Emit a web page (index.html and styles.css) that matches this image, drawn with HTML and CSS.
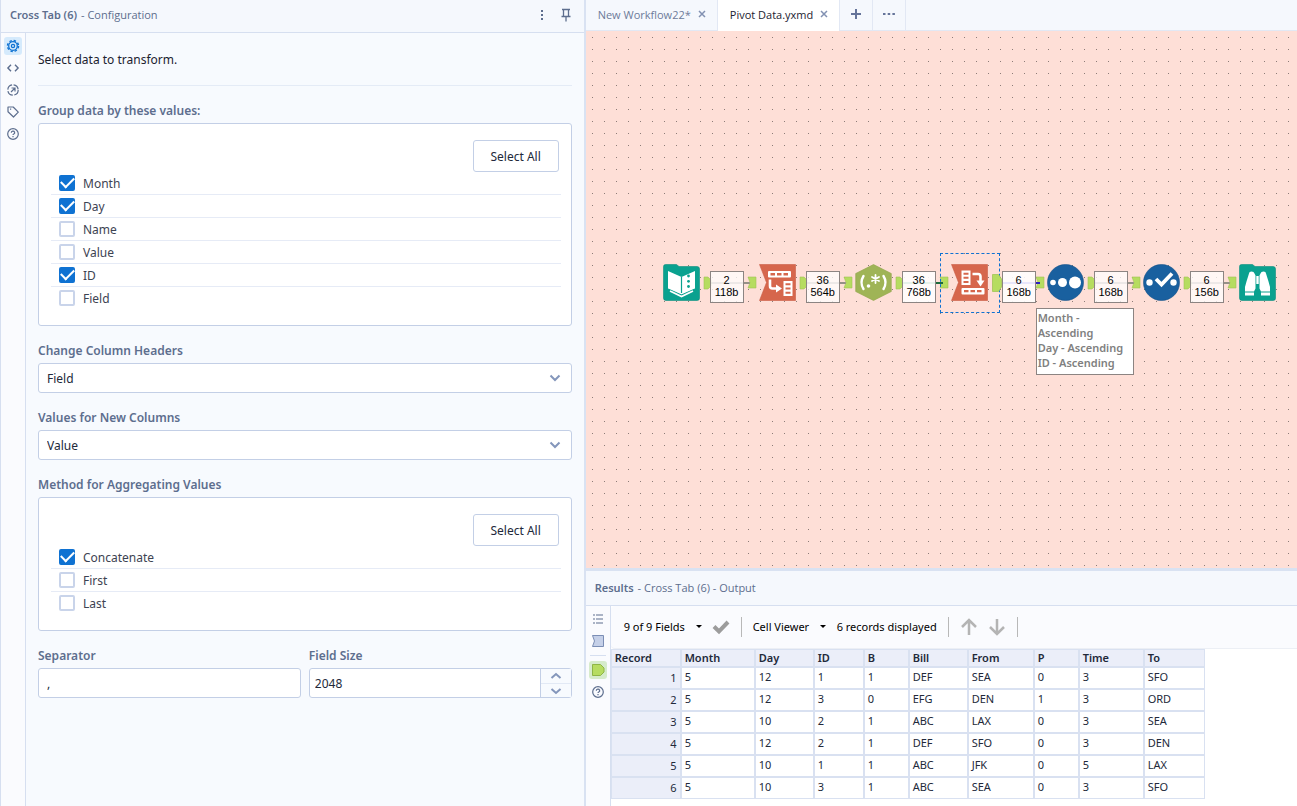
FILE: index.html
```html
<!DOCTYPE html>
<html lang="en">
<head>
  <meta charset="UTF-8">
  <title>Pivot Data.yxmd</title>
  <link rel="stylesheet" href="styles.css">
</head>
<body>

  <section class="config">
    <header class="panel-head">
      <h2>Cross Tab (6)</h2>
      <span>- Configuration</span>
      <div class="head-tools">
        <button type="button" aria-label="More">
          <svg width="14" height="14" viewBox="0 0 14 14" fill="currentColor"><path d="M6 2h2v2H6zM6 6h2v2H6zM6 10h2v2H6z"/></svg>
        </button>
        <button type="button" aria-label="Pin">
          <svg width="14" height="14" viewBox="0 0 14 14" fill="none" stroke="currentColor"><path stroke-width="1.3" d="M3 1.5h8M4.5 1.5v6.5M9.5 1.5v6.5M2.5 8.5h9M7 8.5v5"/></svg>
        </button>
      </div>
    </header>

    <div class="panel-main">
      <nav class="rail">
        <button type="button" class="on" aria-label="Configuration">
          <svg width="14" height="14" viewBox="0 0 14 14" fill="none" stroke="currentColor" stroke-width="1.3"><circle cx="7" cy="7" r="4.3"/><circle cx="7" cy="7" r="1.6"/><circle cx="7" cy="7" r="5.5" stroke-width="1.5" stroke-dasharray="2.4 1.92"/></svg>
        </button>
        <button type="button" aria-label="XML">
          <svg width="14" height="14" viewBox="0 0 14 14" fill="none" stroke="currentColor" stroke-width="1.4"><path d="M5 3.8 1.9 7 5 10.2M9 3.8 12.1 7 9 10.2"/></svg>
        </button>
        <button type="button" aria-label="Navigation">
          <svg width="14" height="14" viewBox="0 0 14 14" fill="none" stroke="currentColor" stroke-width="1.2"><circle cx="7" cy="7" r="5.2" stroke-dasharray="6.6 1.567"/><path d="M5 9l4-4M5.5 5H9v3.5"/></svg>
        </button>
        <button type="button" aria-label="Annotation">
          <svg width="14" height="14" viewBox="0 0 14 14" fill="none" stroke="currentColor" stroke-width="1.2"><path d="M2 2h5.2L12.3 7.2 7.5 12 2 6.8z" stroke-linejoin="round"/><path d="M4 4.2h1.2"/></svg>
        </button>
        <button type="button" aria-label="Help">
          <svg width="14" height="14" viewBox="0 0 14 14" fill="none" stroke="currentColor" stroke-width="1.2"><circle cx="7" cy="7" r="5.3"/><path d="M5.3 5.7a1.7 1.5 0 1 1 2.5 1.3q-.8.4-.8 1M7 9v1.2"/></svg>
        </button>
      </nav>

      <form class="settings">
        <p class="lead">Select data to transform.</p>

        <fieldset>
          <legend>Group data by these values:</legend>
          <div class="box">
            <button type="button" class="select-all">Select All</button>
            <label class="check"><input type="checkbox" checked>Month</label>
            <label class="check"><input type="checkbox" checked>Day</label>
            <label class="check"><input type="checkbox">Name</label>
            <label class="check"><input type="checkbox">Value</label>
            <label class="check"><input type="checkbox" checked>ID</label>
            <label class="check"><input type="checkbox">Field</label>
          </div>
        </fieldset>

        <div class="field">
          <label for="headers">Change Column Headers</label>
          <div class="select">
            <select id="headers"><option>Field</option></select>
            <svg width="12" height="8" viewBox="0 0 12 8"><path d="M1.5 1.5 6 6l4.5-4.5"/></svg>
          </div>
        </div>

        <div class="field">
          <label for="values">Values for New Columns</label>
          <div class="select">
            <select id="values"><option>Value</option></select>
            <svg width="12" height="8" viewBox="0 0 12 8"><path d="M1.5 1.5 6 6l4.5-4.5"/></svg>
          </div>
        </div>

        <fieldset>
          <legend>Method for Aggregating Values</legend>
          <div class="box">
            <button type="button" class="select-all">Select All</button>
            <label class="check"><input type="checkbox" checked>Concatenate</label>
            <label class="check"><input type="checkbox">First</label>
            <label class="check"><input type="checkbox">Last</label>
          </div>
        </fieldset>

        <div class="pair">
          <div class="field">
            <label for="separator">Separator</label>
            <input type="text" id="separator" value=",">
          </div>
          <div class="field">
            <label for="size">Field Size</label>
            <div class="spin">
              <input type="text" inputmode="numeric" id="size" value="2048">
              <div class="spin-buttons">
                <button type="button" aria-label="Increase"><svg width="12" height="8" viewBox="0 0 12 8"><path d="M1.5 6 6 2l4.5 4"/></svg></button>
                <button type="button" aria-label="Decrease"><svg width="12" height="8" viewBox="0 0 12 8"><path d="M1.5 2 6 6l4.5-4"/></svg></button>
              </div>
            </div>
          </div>
        </div>
      </form>
    </div>
  </section>

  <main class="work">
    <nav class="tabs">
      <div class="tab">
        <a href="#">New Workflow22*</a>
        <button type="button" aria-label="Close"><svg width="8" height="8" viewBox="0 0 8 8"><path d="M1 1l6 6M7 1 1 7"/></svg></button>
      </div>
      <div class="tab active">
        <a href="#">Pivot Data.yxmd</a>
        <button type="button" aria-label="Close"><svg width="8" height="8" viewBox="0 0 8 8"><path d="M1 1l6 6M7 1 1 7"/></svg></button>
      </div>
      <button type="button" class="tab-btn" aria-label="New tab"><svg width="12" height="12" viewBox="0 0 12 12"><path d="M6 1v10M1 6h10"/></svg></button>
      <button type="button" class="tab-btn" aria-label="More tabs"><svg width="12" height="12" viewBox="0 0 12 12"><path d="M0 6h2.5M4.7 6h2.5M9.4 6h2.5"/></svg></button>
    </nav>

    <div class="canvas">
      <!-- connectors and anchors, in canvas coordinates -->
      <svg class="wires" width="711" height="537" viewBox="0 0 711 537">
        <defs>
          <path id="out" d="M0 0h4l3 3v6l-3 3H0z"/>
          <path id="in" d="M0 0h8v11H0l2-5.5z"/>
        </defs>
        <g stroke="#a08f8d" stroke-width="1.5">
          <path d="M124 252h39M220 252h39M508 252h39M604 252h39"/>
          <path stroke="#2f8f57" stroke-width="2" d="M316 252h42"/>
          <path stroke="#4034d0" stroke-width="2" d="M416 252h38"/>
        </g>
        <g fill="#b6dc60" stroke="#a2c455" stroke-width=".6">
          <use href="#out" x="118" y="246"/><use href="#out" x="214" y="246"/><use href="#out" x="310" y="246"/>
          <use href="#out" x="502" y="246"/><use href="#out" x="598" y="246"/>
          <use href="#in" x="162" y="246"/><use href="#in" x="258" y="246"/><use href="#in" x="354" y="246"/>
          <use href="#in" x="450" y="246"/><use href="#in" x="546" y="246"/><use href="#in" x="642" y="246"/>
        </g>
        <g stroke-width="1.5">
          <path stroke="#8a8a80" d="M158 252h6M254 252h6M542 252h6M638 252h6"/>
          <path stroke="#1c6b3c" stroke-width="2" d="M350 252h7"/>
          <path stroke="#2d22c0" stroke-width="2" d="M449 252h5"/>
        </g>
      </svg>

      <!-- Text Input -->
      <svg class="tool t1" viewBox="0 0 37 37">
        <path fill="#0aa18f" stroke="#0a8f7f" stroke-width=".6" d="M2.5.5h11l2.5 2h18q2.500 0 2.500 2.500v29.500q0 2-2.500 2h-31q-2.500 0-2.500-2.500V2.500Q.5.500 2.500.5z"/>
        <path fill="#fff" d="M5 7l13.500 6L32 7v18l-13.500 6L5 25z"/>
        <path fill="none" stroke="#0aa18f" stroke-width="1.2" d="M18.500 13v16"/>
        <path fill="none" stroke="#0aa18f" stroke-width="1.2" d="M5 25l13.500 6L32 25"/>
        <path fill="none" stroke="#fff" stroke-width="1.8" d="M7 27l11.500 5.500L30 27"/>
        <g fill="#0aa18f"><circle cx="25.500" cy="12" r="1.400"/><circle cx="25.500" cy="17.300" r="1.400"/><circle cx="25.500" cy="22.500" r="1.400"/></g>
      </svg>
      <!-- Transpose -->
      <svg class="tool t2" viewBox="0 0 37 37">
        <path fill="#d6664c" stroke="#c95d44" stroke-width=".6" d="M.5.5h36v36H.5L7.500 18.500z"/>
        <rect x="9" y="7" width="23" height="6.500" rx="1" fill="#fff"/>
        <path stroke="#d6664c" stroke-width="2.400" d="M11.500 10.200h4.500M18 10.200h4.500M24.500 10.200H29"/>
        <path fill="none" stroke="#fff" stroke-width="2.600" d="M11 15.500v6.500q0 2.500 2.500 2.500h5.500"/>
        <path fill="#fff" d="M17 20.500l6 4-6 4zM24.500 17h9v15h-9z"/>
        <path stroke="#d6664c" stroke-width="2" d="M26.500 20.200h5M26.500 24.400h5M26.500 28.700h5"/>
      </svg>
      <!-- RegEx -->
      <svg class="tool t3" viewBox="0 0 37 37">
        <path fill="#9fb456" stroke="#90a44a" stroke-width=".6" d="M18.500.5 36.300 9.500v18L18.500 36.500.7 27.500v-18z"/>
        <g fill="none" stroke="#fff" stroke-width="2.400" stroke-linecap="round">
          <path d="M8.500 12q-4 6.500 0 13M28.500 12q4 6.500 0 13"/>
          <path stroke-width="1.800" d="M20.500 11v8M17 13l7 4M24 13l-7 4"/>
        </g>
        <circle cx="13.500" cy="22" r="1.800" fill="#fff"/>
      </svg>
      <!-- Cross Tab, selected -->
      <div class="selection"></div>
      <svg class="anchor" viewBox="0 0 10 18"><path fill="#b6dc60" stroke="#a2c455" stroke-width=".8" d="M.5.5h6l3 4.500v8l-3 4.500h-6z"/></svg>
      <svg class="tool t4" viewBox="0 0 37 37">
        <path fill="#d6664c" stroke="#c95d44" stroke-width=".6" d="M.5.5h36v36H.5L7.500 18.500z"/>
        <path fill="#fff" d="M10.500 6.500h9v14.500h-9z"/>
        <path stroke="#d6664c" stroke-width="2" d="M12.500 9.700h5M12.500 13.800h5M12.500 18h5"/>
        <path fill="none" stroke="#fff" stroke-width="2.600" d="M21.500 10h5.500q2.500 0 2.500 2.500v5"/>
        <path fill="#fff" d="M25.500 16.500h8l-4 6z"/>
        <rect x="10.500" y="24" width="23" height="6.500" rx="1" fill="#fff"/>
        <path stroke="#d6664c" stroke-width="2.200" d="M13 27.200h4.500M19.500 27.200H24M26 27.200h4.500"/>
      </svg>
      <!-- Sort -->
      <svg class="tool t5" viewBox="0 0 37 37">
        <circle cx="18.500" cy="18.500" r="18" fill="#19609f" stroke="#145389" stroke-width=".6"/>
        <g fill="#fff"><circle cx="6" cy="18.500" r="2.800"/><circle cx="15.500" cy="18.500" r="4.500"/><circle cx="28" cy="18.500" r="6"/></g>
      </svg>
      <!-- Select -->
      <svg class="tool t6" viewBox="0 0 37 37">
        <circle cx="18.500" cy="18.500" r="18" fill="#19609f" stroke="#145389" stroke-width=".6"/>
        <g fill="#fff"><circle cx="6.500" cy="18.500" r="3.200"/><circle cx="30.500" cy="18.500" r="3.200"/></g>
        <path fill="none" stroke="#fff" stroke-width="3.800" d="M13 15l5.500 5.500L29 9.500"/>
      </svg>
      <!-- Browse -->
      <svg class="tool t7" viewBox="0 0 37 37">
        <path fill="#0aa18f" stroke="#0a8f7f" stroke-width=".6" d="M2.500.5h11l2.500 2h18q2.500 0 2.500 2.500v29.500q0 2-2.500 2h-31q-2.500 0-2.500-2.500V2.500Q.5.500 2.500.5z"/>
        <path fill="#fff" d="M10 9.500q0-2 2.500-2t3 2l1 2v13l-1.500 3H6q-.5-5 1.500-10zM27 9.500q0-2-2.500-2t-3 2l-1 2v13l1.500 3h9q.5-5-1.500-10zM17.300 12h2.400v8h-2.400zM6 28.500h9v3H6zM22 28.500h9v3h-9z"/>
      </svg>

      <div class="count c1">2<br>118b</div>
      <div class="count c2">36<br>564b</div>
      <div class="count solid c3">36<br>768b</div>
      <div class="count solid c4">6<br>168b</div>
      <div class="count c5">6<br>168b</div>
      <div class="count c6">6<br>156b</div>

      <div class="note">Month -<br>Ascending<br>Day - Ascending<br>ID - Ascending</div>
    </div>

    <section class="results">
      <header class="panel-head">
        <h2>Results</h2>
        <span>- Cross Tab (6) - Output</span>
      </header>
      <div class="panel-main">
        <nav class="rail">
          <button type="button" aria-label="Messages">
            <svg width="14" height="14" viewBox="0 0 14 14" fill="none" stroke="currentColor" stroke-width="1.2"><path d="M2 3h2M2 7h2M2 11h2M5 3h7M5 7h7M5 11h7"/></svg>
          </button>
          <button type="button" aria-label="Input anchor">
            <svg width="14" height="14" viewBox="0 0 14 14" fill="#c5d0e8" stroke="#7b8eb5"><path d="M1.500 1.500h11v11h-11l2-5.500z"/></svg>
          </button>
          <hr>
          <button type="button" class="out" aria-label="Output anchor">
            <svg width="14" height="14" viewBox="0 0 14 14" fill="#b6dc60" stroke="#8eb545"><path d="M1.500 1.500h8l3.500 3.500v4l-3.500 3.500h-8z"/></svg>
          </button>
          <button type="button" aria-label="Help">
            <svg width="14" height="14" viewBox="0 0 14 14" fill="none" stroke="currentColor" stroke-width="1.2"><circle cx="7" cy="7" r="5.3"/><path d="M5.3 5.7a1.7 1.5 0 1 1 2.5 1.3q-.8.4-.8 1M7 9v1.2"/></svg>
          </button>
        </nav>

        <div class="grid">
          <div class="toolbar">
            <button type="button" class="menu fields">9 of 9 Fields</button>
            <button type="button" aria-label="Apply"><svg width="18" height="16" viewBox="0 0 18 16"><path fill="none" stroke="#9c9c9c" stroke-width="4" d="M2 7.500l5 5L16 3"/></svg></button>
            <i class="sep"></i>
            <button type="button" class="menu viewer">Cell Viewer</button>
            <span class="shown">6 records displayed</span>
            <i class="sep"></i>
            <button type="button" aria-label="Up"><svg width="18" height="18" viewBox="0 0 18 18"><path fill="none" stroke="#b4b4b4" stroke-width="2.5" d="M9 17V2.500M2 9l7-7 7 7"/></svg></button>
            <button type="button" aria-label="Down"><svg width="18" height="18" viewBox="0 0 18 18"><path fill="none" stroke="#b4b4b4" stroke-width="2.5" d="M9 1v14.500M2 9l7 7 7-7"/></svg></button>
            <i class="sep"></i>
          </div>
          <table>
            <colgroup>
              <col class="w70"><col class="w74"><col class="w59"><col class="w50"><col class="w45"><col class="w59"><col class="w66"><col class="w45"><col class="w65"><col class="w61">
            </colgroup>
            <thead>
              <tr><th>Record</th><th>Month</th><th>Day</th><th>ID</th><th>B</th><th>Bill</th><th>From</th><th>P</th><th>Time</th><th>To</th></tr>
            </thead>
            <tbody>
              <tr><th>1</th><td>5</td><td>12</td><td>1</td><td>1</td><td>DEF</td><td>SEA</td><td>0</td><td>3</td><td>SFO</td></tr>
              <tr><th>2</th><td>5</td><td>12</td><td>3</td><td>0</td><td>EFG</td><td>DEN</td><td>1</td><td>3</td><td>ORD</td></tr>
              <tr><th>3</th><td>5</td><td>10</td><td>2</td><td>1</td><td>ABC</td><td>LAX</td><td>0</td><td>3</td><td>SEA</td></tr>
              <tr><th>4</th><td>5</td><td>12</td><td>2</td><td>1</td><td>DEF</td><td>SFO</td><td>0</td><td>3</td><td>DEN</td></tr>
              <tr><th>5</th><td>5</td><td>10</td><td>1</td><td>1</td><td>ABC</td><td>JFK</td><td>0</td><td>5</td><td>LAX</td></tr>
              <tr><th>6</th><td>5</td><td>10</td><td>3</td><td>1</td><td>ABC</td><td>SEA</td><td>0</td><td>3</td><td>SFO</td></tr>
            </tbody>
          </table>
        </div>
      </div>
    </section>
  </main>

</body>
</html>
```
FILE: styles.css
```css
* {
  box-sizing: border-box;
}
body {
  margin: 0;
  min-height: 100vh;
  display: grid;
  grid-template-columns: 45% minmax(0, 1fr);
  font-family: "Noto Sans", "Open Sans", sans-serif;
  font-size: 12px;
  color: #22293a;
  background: #f7fafe;
}
button, input, select {
  font: inherit;
  color: inherit;
}
button {
  padding: 0;
  border: 0;
  background: none;
}
svg {
  display: block;
}

/* panels */
.config {
  display: flex;
  flex-direction: column;
  border-left: 1px solid #d6dff0;
  background: #f7fafe;
}
.panel-head {
  display: flex;
  align-items: center;
  gap: 4px;
  height: 33px;
  padding: 0 11px 3px 9px;
  border-bottom: 1px solid #d6dff0;
  background: #f5f8fd;
  font: 11px "Open Sans", sans-serif;
  color: #5d6e8e;
}
.panel-head h2 {
  margin: 0;
  font: 600 11px "Noto Sans", sans-serif;
}
.head-tools {
  display: flex;
  gap: 10px;
  margin-left: auto;
}
.panel-main {
  flex: 1;
  display: flex;
}
.rail {
  flex: none;
  width: 25px;
  padding: 4px 3px;
  display: flex;
  flex-direction: column;
  gap: 4px;
  border-right: 1px solid #d6dff0;
  background: #fafbfe;
  color: #5d6e8e;
}
.rail button {
  display: grid;
  place-items: center;
  width: 18px;
  height: 18px;
  border-radius: 3px;
}
.rail .on {
  background: #d5eafc;
  color: #0f72d2;
}
.rail .out {
  background: #d6ebcb;
}
.rail hr {
  width: 16px;
  margin: 1px;
  border: 0;
  border-top: 1px solid #d6dff0;
}

/* settings form */
.settings {
  flex: 1;
  display: flex;
  flex-direction: column;
  gap: 15px;
  padding: 0 12px 16px 12px;
}
.lead {
  margin: 0;
  height: 53px;
  line-height: 53px;
  border-bottom: 1px solid #e4ebf6;
  color: #1c2230;
}
fieldset {
  min-width: 0;
  margin: 0;
  padding: 0;
  border: 0;
}
legend, .field > label {
  display: block;
  padding: 0;
  margin-bottom: 2px;
  line-height: 20px;
  font-weight: 600;
  color: #5d6e8e;
}
.box {
  display: flex;
  flex-direction: column;
  padding: 16px 10px 15px 12px;
  border: 1px solid #c3cfe6;
  border-radius: 3px;
  background: #fff;
}
.select-all {
  align-self: flex-end;
  width: 86px;
  height: 32px;
  margin-right: 2px;
  border: 1px solid #c3cfe6;
  border-radius: 3px;
}
.check {
  display: flex;
  align-items: center;
  gap: 8px;
  height: 23px;
  padding-left: 8px;
  border-bottom: 1px solid #e6ebf6;
  color: #3d4352;
}
.check:last-child {
  border-bottom-color: transparent;
}
.check input {
  appearance: none;
  width: 16px;
  height: 16px;
  margin: 0;
  border: 2px solid #c9d4ea;
  border-radius: 2px;
  background: #fff;
  display: grid;
  place-items: center;
}
.check input:checked {
  border-color: #0f72d2;
  background: #0f72d2;
}
.check input:checked::after {
  content: "";
  width: 11px;
  height: 6px;
  margin-bottom: 5px;
  border: solid #fff;
  border-width: 0 0 2px 2px;
  transform: rotate(-45deg);
}
.select {
  position: relative;
}
.select select, .field > input, .spin {
  display: block;
  width: 100%;
  height: 30px;
  padding: 0 8px;
  border: 1px solid #c3cfe6;
  border-radius: 3px;
  background: #fff;
  appearance: none;
}
.select svg {
  position: absolute;
  right: 11px;
  top: 11px;
  pointer-events: none;
}
.select path, .spin path {
  fill: none;
  stroke: #8496bb;
  stroke-width: 2;
}
.pair {
  display: grid;
  grid-template-columns: 1fr 1fr;
  gap: 8px;
}
.spin {
  display: flex;
  padding: 0;
}
.spin input {
  flex: 1;
  min-width: 0;
  padding: 0 5px;
  border: 0;
  background: none;
}
.spin-buttons {
  width: 31px;
  display: grid;
  grid-template-rows: 1fr 1fr;
  border-left: 1px solid #c3cfe6;
  background: #f7fafe;
}
.spin-buttons button {
  display: grid;
  place-items: center;
}
.spin-buttons button + button {
  border-top: 1px solid #e2e9f5;
}

/* workspace */
.work {
  display: flex;
  flex-direction: column;
  border-left: 2px solid #d9e2f2;
}
.tabs {
  display: flex;
  height: 31px;
  background: #f5f8fd;
  border-bottom: 1px solid #e2e8f4;
  font: 11px "Open Sans", sans-serif;
}
.tab {
  display: flex;
  align-items: center;
  gap: 7px;
  height: 31px;
  padding: 0 11px 3px 12px;
  border-right: 1px solid #e2e8f4;
}
.tab a {
  color: #6d7b9a;
  text-decoration: none;
}
.tab.active {
  background: #fff;
}
.tab.active a {
  color: #1c2230;
}
.tabs path {
  fill: none;
  stroke: #8291b2;
  stroke-width: 1.5;
}
.tab-btn {
  display: grid;
  place-items: center;
  width: 33px;
  padding-bottom: 2px;
  border-right: 1px solid #e2e8f4;
}
.tabs .tab-btn path {
  stroke: #65749a;
  stroke-width: 2;
}

/* workflow canvas, dots every 12px */
.canvas {
  flex: 1;
  position: relative;
  min-height: 360px;
  overflow: hidden;
  background: conic-gradient(from 270deg at 1px 1px, #8d7c78 90deg, #fedfd7 0) 6px 6px / 12px 12px;
}
.wires {
  position: absolute;
  left: 0;
  top: 0;
}
.tool {
  position: absolute;
  top: 233px;
  width: 37px;
  height: 37px;
}
.t1 { left: 77px; }
.t2 { left: 173px; }
.t3 { left: 269px; }
.t4 { left: 365px; }
.t5 { left: 461px; }
.t6 { left: 557px; }
.t7 { left: 653px; }
.count {
  position: absolute;
  top: 240px;
  width: 34px;
  height: 32px;
  padding-top: 2px;
  border: 1px solid #8c8482;
  background: rgba(255, 255, 255, .75);
  font: 11px/12px "Liberation Sans", sans-serif;
  text-align: center;
  color: #000;
}
.count.solid {
  background: rgba(255, 255, 255, .88);
}
.c1 { left: 124px; }
.c2 { left: 220px; }
.c3 { left: 316px; }
.c4 { left: 416px; }
.c5 { left: 508px; }
.c6 { left: 604px; }
.selection {
  position: absolute;
  left: 354px;
  top: 222px;
  width: 60px;
  height: 60px;
  border: 1px dashed #0f72d2;
}
.anchor {
  position: absolute;
  left: 406px;
  top: 243px;
  width: 10px;
  height: 18px;
}
.note {
  position: absolute;
  left: 450px;
  top: 277px;
  width: 98px;
  height: 67px;
  padding: 1px;
  border: 1px solid #8c8482;
  background: #fff;
  font-size: 11px;
  line-height: 15px;
  font-weight: 600;
  color: #808080;
  white-space: nowrap;
}

/* results */
.results {
  border-top: 3px solid #d9e2f2;
  background: #fff;
}
.results .panel-head {
  height: 35px;
  padding-bottom: 1px;
}
.grid {
  flex: 1;
  min-width: 0;
  padding-bottom: 7px;
  overflow: hidden;
}
.toolbar {
  display: flex;
  align-items: center;
  height: 43px;
  padding: 0 0 1px 13px;
  border-bottom: 1px solid #eceff5;
  border-radius: 4px 0 0 4px;
  background: #fafbfe;
  font-size: 11px;
  color: #000;
  white-space: nowrap;
}
.toolbar button + button {
  margin-left: 10px;
}
.menu {
  display: flex;
  align-items: center;
  justify-content: space-between;
}
.fields {
  width: 78px;
}
.viewer {
  width: 73px;
}
.menu::after {
  content: "";
  border: 3px solid transparent;
  border-top-color: #000;
  border-bottom: 0;
}
.shown {
  margin-left: 11px;
}
.sep {
  width: 1px;
  height: 20px;
  margin: 0 11px;
  background: #b8b8b8;
}
table {
  table-layout: fixed;
  width: 594px;
  border-collapse: separate;
  border-spacing: 0;
  font-size: 11px;
  line-height: 14px;
}
.w45 { width: 45px; }
.w50 { width: 50px; }
.w59 { width: 59px; }
.w61 { width: 61px; }
.w65 { width: 65px; }
.w66 { width: 66px; }
.w70 { width: 70px; }
.w74 { width: 74px; }
th, td {
  height: 22px;
  padding: 0 3px;
  border: 1px solid #d9e1f1;
  text-align: left;
  background: #fff;
}
td {
  padding-bottom: 2px;
}
th {
  background: #ebeef9;
}
thead th {
  height: 18px;
  font-weight: 600;
}
tbody th {
  font-weight: 400;
  text-align: right;
}
```
